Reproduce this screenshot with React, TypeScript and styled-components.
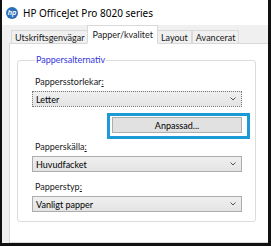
import React from 'react';
import styled, { createGlobalStyle } from 'styled-components';

const GlobalStyle = createGlobalStyle`
    html, body {
        margin: 0;
        padding: 0;
        background: #111;
    }
    body {
        font-family: Lato, 'Noto Sans', sans-serif;
        font-size: 9px;
        color: #1a1a1a;
    }
`;

const Window = styled.div`
    width: 266px;
    height: 243px;
    margin-left: 2px;
    background: #f0f0f0;
    display: flex;
    flex-direction: column;
    overflow: hidden;
`;

const TitleBar = styled.div`
    height: 25px;
    background: #fff;
    display: flex;
    align-items: center;
    gap: 5px;
    padding-left: 4px;
    font-family: 'Noto Sans', sans-serif;
    font-size: 10px;
    color: #000;
`;

const Body = styled.div`
    flex: 1;
    display: flex;
    flex-direction: column;
    padding-left: 7px;
`;

const TabStrip = styled.div`
    display: flex;
    align-items: flex-end;
    height: 19px;
    padding-left: 2px;
    position: relative;
    z-index: 1;
    margin-bottom: -1px;
`;

const Tab = styled.div<{ $active?: boolean }>`
    height: ${(p) => (p.$active ? '19px' : '14px')};
    padding: 0 ${(p) => (p.$active ? '4px' : '3px')};
    margin: 0 ${(p) => (p.$active ? '-1px' : '0')};
    display: flex;
    align-items: center;
    box-sizing: border-box;
    border: 1px solid #d9d9d9;
    border-bottom-color: ${(p) => (p.$active ? '#fff' : '#d9d9d9')};
    background: ${(p) => (p.$active ? '#fff' : '#f0f0f0')};
    position: relative;
    z-index: ${(p) => (p.$active ? 2 : 1)};
    white-space: nowrap;
`;

const Panel = styled.div`
    flex: 1;
    background: #fff;
    border: 1px solid #d9d9d9;
    border-right: none;
    padding: 10px 0 0 7px;
`;

const Group = styled.fieldset`
    width: 239px;
    height: 168px;
    box-sizing: border-box;
    margin: 0;
    border: 1px solid #dcdcdc;
    border-radius: 3px;
    padding: 10px 0 0 14px;
    display: flex;
    flex-direction: column;
    align-items: flex-start;
`;

const Legend = styled.legend`
    color: #3636d9;
    padding: 0 1px;
    margin-left: 3px;
    line-height: 12px;
`;

const Label = styled.div`
    line-height: 12px;
    margin-left: 3px;
    margin-bottom: 3px;
`;

const Access = styled.span`
    text-decoration: underline;
`;

const Select = styled.div<{ $focused?: boolean }>`
    width: 210px;
    height: 16px;
    box-sizing: border-box;
    border: 1px ${(p) => (p.$focused ? 'dotted #7a7a7a' : 'solid #adadad')};
    background: linear-gradient(#efefef, #e4e4e4);
    display: flex;
    align-items: center;
    justify-content: space-between;
    padding: 0 5px 0 3px;
    color: #000;
`;

const Highlight = styled.div`
    margin: 6px 0 2px 75px;
    width: 143px;
    height: 26px;
    box-sizing: border-box;
    border: 3px solid #1c9ad6;
    padding: 1px 0 0 2px;
`;

const Button = styled.div`
    width: 130px;
    height: 16px;
    box-sizing: border-box;
    border: 1px solid #adadad;
    background: #e1e1e1;
    display: flex;
    align-items: center;
    justify-content: center;
    color: #000;
`;

const Spacer = styled.div<{ $h: number }>`
    height: ${(p) => p.$h}px;
`;

const Chevron = () => (
    <svg width="6" height="4" viewBox="0 0 6 4">
        <path d="M0.5 0.5 L3 3 L5.5 0.5" fill="none" stroke="#555" strokeWidth="1" />
    </svg>
);

const HpLogo = () => (
    <svg width="12" height="12" viewBox="0 0 12 12">
        <circle cx="6" cy="6" r="6" fill="#2a6fb8" />
        <text
            x="6"
            y="8.3"
            textAnchor="middle"
            fontSize="7"
            fontStyle="italic"
            fontWeight="bold"
            fontFamily="Liberation Sans, sans-serif"
            fill="#fff"
        >
            hp
        </text>
    </svg>
);

const App = () => (
    <>
        <GlobalStyle />
        <Window>
            <TitleBar>
                <HpLogo />
                HP OfficeJet Pro 8020 series
            </TitleBar>
            <Body>
                <TabStrip>
                    <Tab>Utskriftsgenvägar</Tab>
                    <Tab $active>Papper/kvalitet</Tab>
                    <Tab>Layout</Tab>
                    <Tab>Avancerat</Tab>
                </TabStrip>
                <Panel>
                    <Group>
                        <Legend>Pappersalternativ</Legend>
                        <Label>
                            Pappersstorlekar<Access>:</Access>
                        </Label>
                        <Select $focused>
                            Letter
                            <Chevron />
                        </Select>
                        <Highlight>
                            <Button>Anpassad...</Button>
                        </Highlight>
                        <Label>
                            Papperskälla<Access>:</Access>
                        </Label>
                        <Select>
                            Huvudfacket
                            <Chevron />
                        </Select>
                        <Spacer $h={9} />
                        <Label>
                            Papperstyp<Access>:</Access>
                        </Label>
                        <Select>
                            Vanligt papper
                            <Chevron />
                        </Select>
                    </Group>
                </Panel>
            </Body>
        </Window>
    </>
);

export default App;
